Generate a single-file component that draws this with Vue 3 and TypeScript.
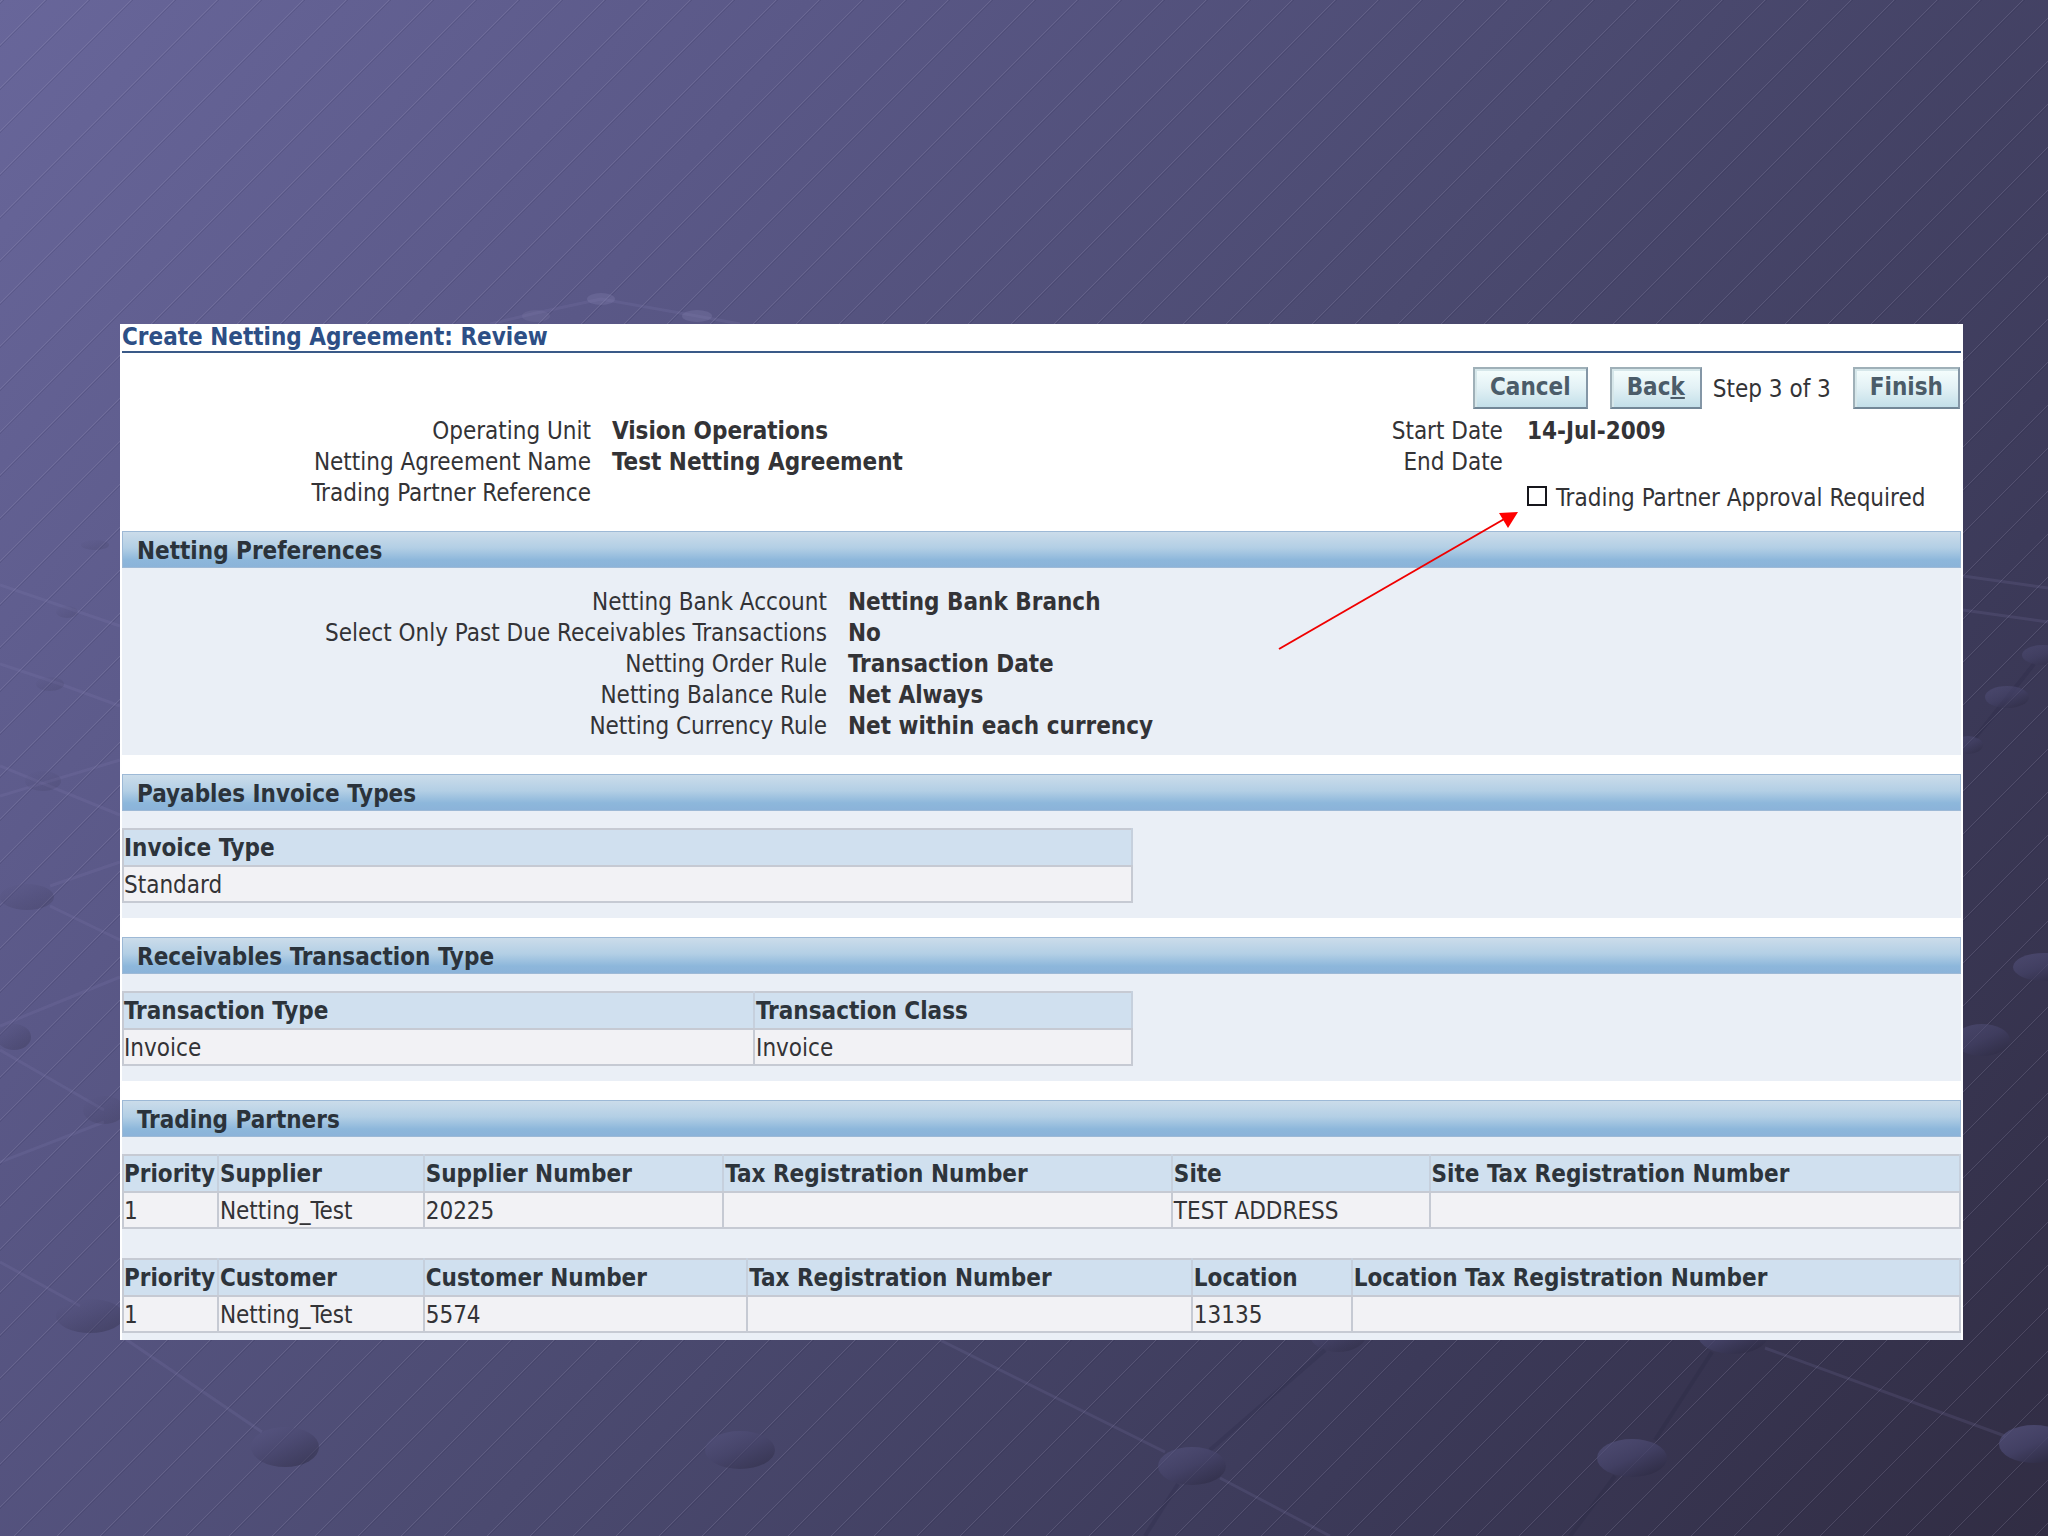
<script setup lang="ts">
import { ref } from 'vue'

interface Field { label: string; value: string }
interface Column { title: string; share: number }
interface Grid { columns: Column[]; rows: string[][]; narrow?: boolean }
interface Section { title: string; fields?: Field[]; grids?: Grid[] }
interface Orb { x: number; y: number; rx: number; ry: number; o: number }

const agreement: Field[] = [
  { label: 'Operating Unit', value: 'Vision Operations' },
  { label: 'Netting Agreement Name', value: 'Test Netting Agreement' },
  { label: 'Trading Partner Reference', value: '' },
]
const dates: Field[] = [
  { label: 'Start Date', value: '14-Jul-2009' },
  { label: 'End Date', value: '' },
]
const approvalRequired = ref(false)

const sections: Section[] = [
  {
    title: 'Netting Preferences',
    fields: [
      { label: 'Netting Bank Account', value: 'Netting Bank Branch' },
      { label: 'Select Only Past Due Receivables Transactions', value: 'No' },
      { label: 'Netting Order Rule', value: 'Transaction Date' },
      { label: 'Netting Balance Rule', value: 'Net Always' },
      { label: 'Netting Currency Rule', value: 'Net within each currency' },
    ],
  },
  {
    title: 'Payables Invoice Types',
    grids: [{ narrow: true, columns: [{ title: 'Invoice Type', share: 100 }], rows: [['Standard']] }],
  },
  {
    title: 'Receivables Transaction Type',
    grids: [{
      narrow: true,
      columns: [{ title: 'Transaction Type', share: 632 }, { title: 'Transaction Class', share: 379 }],
      rows: [['Invoice', 'Invoice']],
    }],
  },
  {
    title: 'Trading Partners',
    grids: [
      {
        columns: [
          { title: 'Priority', share: 95 },
          { title: 'Supplier', share: 206 },
          { title: 'Supplier Number', share: 300 },
          { title: 'Tax Registration Number', share: 449 },
          { title: 'Site', share: 258 },
          { title: 'Site Tax Registration Number', share: 531 },
        ],
        rows: [['1', 'Netting_Test', '20225', '', 'TEST ADDRESS', '']],
      },
      {
        columns: [
          { title: 'Priority', share: 95 },
          { title: 'Customer', share: 206 },
          { title: 'Customer Number', share: 324 },
          { title: 'Tax Registration Number', share: 445 },
          { title: 'Location', share: 160 },
          { title: 'Location Tax Registration Number', share: 609 },
        ],
        rows: [['1', 'Netting_Test', '5574', '', '13135', '']],
      },
    ],
  },
]

function columnWidth(grid: Grid, column: Column): string {
  const total = grid.columns.reduce((sum, c) => sum + c.share, 0)
  return `${(column.share / total) * 100}%`
}

const orbs: Orb[] = [
  { x: 285, y: 1447, rx: 34, ry: 20, o: 0.7 },
  { x: 740, y: 1450, rx: 35, ry: 19, o: 0.7 },
  { x: 1192, y: 1466, rx: 34, ry: 19, o: 0.8 },
  { x: 1632, y: 1458, rx: 35, ry: 19, o: 0.9 },
  { x: 2034, y: 1444, rx: 35, ry: 19, o: 1 },
  { x: 90, y: 1316, rx: 34, ry: 17, o: 0.5 },
  { x: 104, y: 1110, rx: 21, ry: 14, o: 0.3 },
  { x: 14, y: 1037, rx: 17, ry: 13, o: 0.4 },
  { x: 27, y: 897, rx: 27, ry: 13, o: 0.3 },
  { x: 43, y: 781, rx: 18, ry: 10, o: 0.2 },
  { x: 50, y: 684, rx: 14, ry: 7, o: 0.2 },
  { x: 67, y: 612, rx: 11, ry: 6, o: 0.2 },
  { x: 95, y: 545, rx: 14, ry: 5, o: 0.2 },
  { x: 1733, y: 1335, rx: 35, ry: 19, o: 0.9 },
  { x: 1338, y: 1335, rx: 28, ry: 17, o: 0.6 },
  { x: 1982, y: 1040, rx: 28, ry: 16, o: 0.7 },
  { x: 2044, y: 967, rx: 31, ry: 14, o: 0.8 },
  { x: 2007, y: 697, rx: 22, ry: 11, o: 0.7 },
  { x: 2043, y: 655, rx: 21, ry: 10, o: 0.6 },
  { x: 1968, y: 745, rx: 15, ry: 9, o: 0.6 },
]
const paleOrbs: Orb[] = [
  { x: 601, y: 299, rx: 14, ry: 6, o: 0.3 },
  { x: 697, y: 316, rx: 15, ry: 6, o: 0.3 },
  { x: 536, y: 316, rx: 14, ry: 6, o: 0.2 },
]
const links = [
  'M490 324L536 313L601 299L697 316L740 324',
  'M0 585L120 626', 'M0 664L60 684L120 706', 'M0 766L120 815', 'M0 796L120 760',
  'M50 906L120 940', 'M50 886L120 862', 'M0 1050L104 1110', 'M0 1026L120 977',
  'M0 1162L104 1122', 'M0 1262L80 1306', 'M124 1338L262 1432',
  'M940 1340L1165 1452M1220 1478L1330 1536', 'M1765 1348L2005 1436',
  'M1963 576L2048 588', 'M1963 610L2048 622',
]
const shades = ['M1712 1352L1655 1440', 'M1615 1476L1570 1536', 'M1325 1350L1210 1450', 'M1178 1484L1145 1536', 'M1975 738L2034 664']
</script>

<template>
  <div class="slide">
    <svg class="backdrop" viewBox="0 0 2048 1536" preserveAspectRatio="xMidYMid slice" aria-hidden="true">
      <defs>
        <linearGradient id="sky" gradientUnits="userSpaceOnUse" x1="0" y1="0" x2="2085" y2="1557">
          <stop offset="0" stop-color="#68669a" />
          <stop offset="0.25" stop-color="#5a5887" />
          <stop offset="0.5" stop-color="#4b4a70" />
          <stop offset="0.75" stop-color="#3c3a59" />
          <stop offset="1" stop-color="#302c42" />
        </linearGradient>
        <linearGradient id="orb" x1="0.1" y1="0" x2="0.9" y2="1">
          <stop offset="0" stop-color="#5c5a88" stop-opacity="0.6" />
          <stop offset="0.5" stop-color="#454369" stop-opacity="0.8" />
          <stop offset="1" stop-color="#28263c" stop-opacity="0.7" />
        </linearGradient>
        <pattern id="rays" patternUnits="userSpaceOnUse" x="2" y="0" width="43" height="43">
          <path d="M44 -1L-1 44" stroke="#a9a3c4" stroke-opacity="0.2" />
          <path d="M45 0L0 45M2 0L0 2" stroke="#1c1a38" stroke-opacity="0.12" />
        </pattern>
      </defs>
      <rect width="2048" height="1536" fill="url(#sky)" />
      <rect width="2048" height="1536" fill="url(#rays)" />
      <path v-for="d in links" :key="d" :d="d" fill="none" stroke="#8a86bd" stroke-opacity="0.15" stroke-width="3" />
      <path v-for="d in shades" :key="d" :d="d" fill="none" stroke="#1d1b33" stroke-opacity="0.15" stroke-width="4" />
      <ellipse v-for="n in orbs" :key="`${n.x}-${n.y}`" :cx="n.x" :cy="n.y" :rx="n.rx" :ry="n.ry" :opacity="n.o" fill="url(#orb)" />
      <ellipse v-for="n in paleOrbs" :key="`${n.x}-${n.y}`" :cx="n.x" :cy="n.y" :rx="n.rx" :ry="n.ry" :opacity="n.o" fill="#8582b0" />
    </svg>

    <main class="panel">
      <h1 class="title">Create Netting Agreement: Review</h1>

      <div class="actions">
        <button type="button" class="btn">Cancel</button>
        <div class="steps">
          <button type="button" class="btn" accesskey="k">Bac<u>k</u></button>
          <span class="step">Step 3 of 3</span>
        </div>
        <button type="button" class="btn">Finish</button>
      </div>

      <div class="summary">
        <dl class="fields left">
          <template v-for="f in agreement" :key="f.label">
            <dt>{{ f.label }}</dt>
            <dd>{{ f.value }}</dd>
          </template>
        </dl>
        <div>
          <dl class="fields right">
            <template v-for="f in dates" :key="f.label">
              <dt>{{ f.label }}</dt>
              <dd>{{ f.value }}</dd>
            </template>
          </dl>
          <div class="fields right approval-row">
            <div class="approval">
              <input id="approval" v-model="approvalRequired" type="checkbox" />
              <label for="approval">Trading Partner Approval Required</label>
              <svg class="arrow" width="240" height="138" viewBox="0 0 240 138" aria-hidden="true">
                <path d="M1 137L228 6" stroke="#f00000" stroke-width="2" />
                <path d="M240 0L221 1L230 16Z" fill="#ff0000" />
              </svg>
            </div>
          </div>
        </div>
      </div>

      <section v-for="s in sections" :key="s.title" class="section">
        <h2 class="bar">{{ s.title }}</h2>
        <div class="body">
          <dl v-if="s.fields" class="fields prefs">
            <template v-for="f in s.fields" :key="f.label">
              <dt>{{ f.label }}</dt>
              <dd>{{ f.value }}</dd>
            </template>
          </dl>
          <table v-for="(g, i) in s.grids" :key="i" class="grid" :class="{ narrow: g.narrow }">
            <colgroup>
              <col v-for="c in g.columns" :key="c.title" :style="{ width: columnWidth(g, c) }" />
            </colgroup>
            <thead>
              <tr><th v-for="c in g.columns" :key="c.title" scope="col">{{ c.title }}</th></tr>
            </thead>
            <tbody>
              <tr v-for="(r, ri) in g.rows" :key="ri"><td v-for="(v, ci) in r" :key="ci">{{ v }}</td></tr>
            </tbody>
          </table>
        </div>
      </section>
    </main>
  </div>
</template>

<style>
body { margin: 0; background: #4b4a70; }
</style>

<style scoped>
.slide {
  position: relative;
  box-sizing: border-box;
  min-height: 100vh;
  padding: 324px 85px 0 120px;
  overflow: hidden;
  font-family: "DejaVu Sans Condensed", "DejaVu Sans", sans-serif;
  font-size: 24px;
  line-height: 31px;
  color: #333336;
}
.backdrop {
  position: absolute;
  inset: 0;
  width: 100%;
  height: 100%;
}
.panel {
  position: relative;
  padding: 0 2px;
  background: #fff;
}
.title {
  margin: 0;
  border-bottom: 2px solid #3a5a88;
  font-size: 24px;
  line-height: 27px;
  color: #2d4f86;
}
.actions {
  display: flex;
  justify-content: flex-end;
  gap: 22px;
  padding: 14px 1px 0 0;
}
.steps {
  display: flex;
  gap: 11px;
}
.step { padding-top: 7px; }
.btn {
  box-sizing: border-box;
  height: 42px;
  padding: 0 15px 2px;
  border: 2px solid;
  border-color: #9fb0b8 #8496a6 #728797 #9fb0b8;
  background: linear-gradient(#f6fefd, #e2f1f5 50%, #c3dfe9);
  box-shadow: inset 2px 2px 0 #d6e7ea;
  font: bold 24px/31px "DejaVu Sans Condensed", "DejaVu Sans", sans-serif;
  color: #4b5c69;
}
.summary {
  display: grid;
  grid-template-columns: 51% 49%;
  align-items: start;
  padding: 7px 0 17px;
}
.fields {
  display: grid;
  margin: 0;
}
.fields dt {
  min-height: 31px;
  text-align: right;
}
.fields dd {
  margin: 0;
  padding-left: 21px;
  font-weight: bold;
}
.left { grid-template-columns: 1fr 1fr; }
.right { grid-template-columns: 59fr 61fr; }
.right dd { padding-left: 24px; }
.prefs { grid-template-columns: 46fr 74fr; padding: 2px 0 0; }
.approval-row { padding-top: 5px; }
.approval {
  position: relative;
  grid-column: 2;
  display: flex;
  gap: 9px;
  margin-left: 24px;
  white-space: nowrap;
}
.approval input {
  appearance: none;
  width: 20px;
  height: 20px;
  margin: 3px 0 0;
  border: 2px solid #16161c;
  background: #fff;
}
.approval input:checked { background: #16161c; box-shadow: inset 0 0 0 3px #fff; }
.arrow {
  position: absolute;
  top: 29px;
  right: 100%;
  margin-right: 9px;
}
.section + .section { margin-top: 19px; }
.bar {
  margin: 0;
  padding: 4px 14px 0;
  border: 1px solid #9db9d6;
  background: linear-gradient(#cbdcea, #b3cfe5 45%, #8db7db 80%, #8bb3d9);
  font-size: 24px;
  line-height: 31px;
  color: #2b333b;
}
.body {
  display: grid;
  row-gap: 29px;
  padding: 17px 0 15px;
  background: #eaeff6;
}
.section:nth-of-type(1) .body { padding-bottom: 13px; }
.section:last-child .body { padding-bottom: 7px; }
.grid {
  width: 100%;
  table-layout: fixed;
  border-collapse: collapse;
  text-align: left;
}
.narrow { width: 55%; }
.grid th,
.grid td {
  padding: 3px 0 0 1px;
  border: 2px solid #c6cad3;
  height: 31px;
  white-space: nowrap;
}
.grid th {
  padding-bottom: 1px;
  border-right-color: #c6d0dd;
  background: #d0e0ef;
  color: #2d343b;
}
.grid th:first-child,
.grid td:first-child { padding-left: 0; }
.grid td { background: #f2f2f5; }
</style>
